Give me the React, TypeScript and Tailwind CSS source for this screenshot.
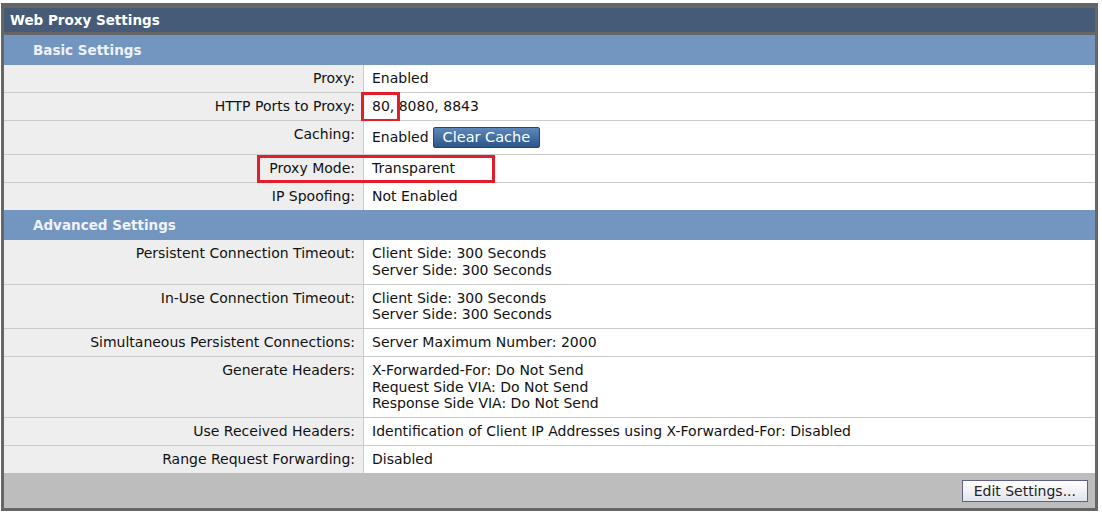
type Row = { label: string; value: React.ReactNode; mark?: "ports" | "mode" };

const basic: Row[] = [
  { label: "Proxy:", value: "Enabled" },
  { label: "HTTP Ports to Proxy:", value: "80, 8080, 8843", mark: "ports" },
  {
    label: "Caching:",
    value: (
      <span className="flex items-center gap-[4px] py-[1px]">
        Enabled
        <button className="h-[21px] rounded-[2px] border border-[#24466e] bg-gradient-to-b from-[#5d88bb] to-[#2c5689] px-[9px] text-[14.5px] leading-[19px] text-white">
          Clear Cache
        </button>
      </span>
    ),
  },
  { label: "Proxy Mode:", value: "Transparent", mark: "mode" },
  { label: "IP Spoofing:", value: "Not Enabled" },
];

const advanced: Row[] = [
  { label: "Persistent Connection Timeout:", value: ["Client Side: 300 Seconds", "Server Side: 300 Seconds"] },
  { label: "In-Use Connection Timeout:", value: ["Client Side: 300 Seconds", "Server Side: 300 Seconds"] },
  { label: "Simultaneous Persistent Connections:", value: "Server Maximum Number: 2000" },
  {
    label: "Generate Headers:",
    value: ["X-Forwarded-For: Do Not Send", "Request Side VIA: Do Not Send", "Response Side VIA: Do Not Send"],
  },
  { label: "Use Received Headers:", value: "Identification of Client IP Addresses using X-Forwarded-For: Disabled" },
  { label: "Range Request Forwarding:", value: "Disabled" },
];

function SettingRow({ row }: { row: Row }) {
  const lines = Array.isArray(row.value) ? row.value : [row.value];
  return (
    <div className="relative flex border-b border-[#cbcbcb] last:border-b-0">
      <div className="w-[360px] shrink-0 border-r border-[#cbcbcb] bg-[#eeeeee] py-[5px] pr-[8px] text-right">
        {row.label}
      </div>
      <div className="flex-1 bg-white py-[5px] pl-[8px]">
        {lines.map((l, i) => (
          <div key={i} className={i > 0 ? "-mt-[0.5px]" : ""}>
            {l}
          </div>
        ))}
      </div>
      {row.mark === "ports" && (
        <div className="pointer-events-none absolute left-[357px] top-[-1px] h-[30px] w-[39px] border-[3px] border-[#e41d2a]" />
      )}
      {row.mark === "mode" && (
        <div className="pointer-events-none absolute left-[253px] top-0 h-[28px] w-[238px] border-[3px] border-[#e41d2a]" />
      )}
    </div>
  );
}

function Section({ title, rows }: { title: string; rows: Row[] }) {
  return (
    <div>
      <div className="h-[30px] bg-[#7396c0] pl-[29px] text-[13.5px] font-bold leading-[30px] text-[#eef2fb]">{title}</div>
      {rows.map((r) => (
        <SettingRow key={r.label} row={r} />
      ))}
    </div>
  );
}

export default function App() {
  return (
    <div className="h-[515px] w-[1102px] bg-white pl-[1px] pt-[3px] font-['DejaVu_Sans',Verdana,sans-serif] text-[14px] leading-[17px] text-[#111]">
      <div className="w-[1097px] border-x-[3px] border-b-[3px] border-t-[5px] border-[#666666] bg-[#666666]">
        <div className="h-[24px] bg-[#455b77] pl-[6px] text-[13.5px] font-bold leading-[24px] text-white">
          Web Proxy Settings
        </div>
        <div className="mt-[3px]">
          <Section title="Basic Settings" rows={basic} />
          <Section title="Advanced Settings" rows={advanced} />
        </div>
        <div className="flex h-[35px] items-center justify-end bg-[#bdbdbd] pr-[7px]">
          <button className="h-[22px] border border-[#5d5f86] bg-gradient-to-b from-white to-[#e2e4ee] px-[11px] text-[14px] leading-[20px] text-[#222]">
            Edit Settings...
          </button>
        </div>
      </div>
    </div>
  );
}
